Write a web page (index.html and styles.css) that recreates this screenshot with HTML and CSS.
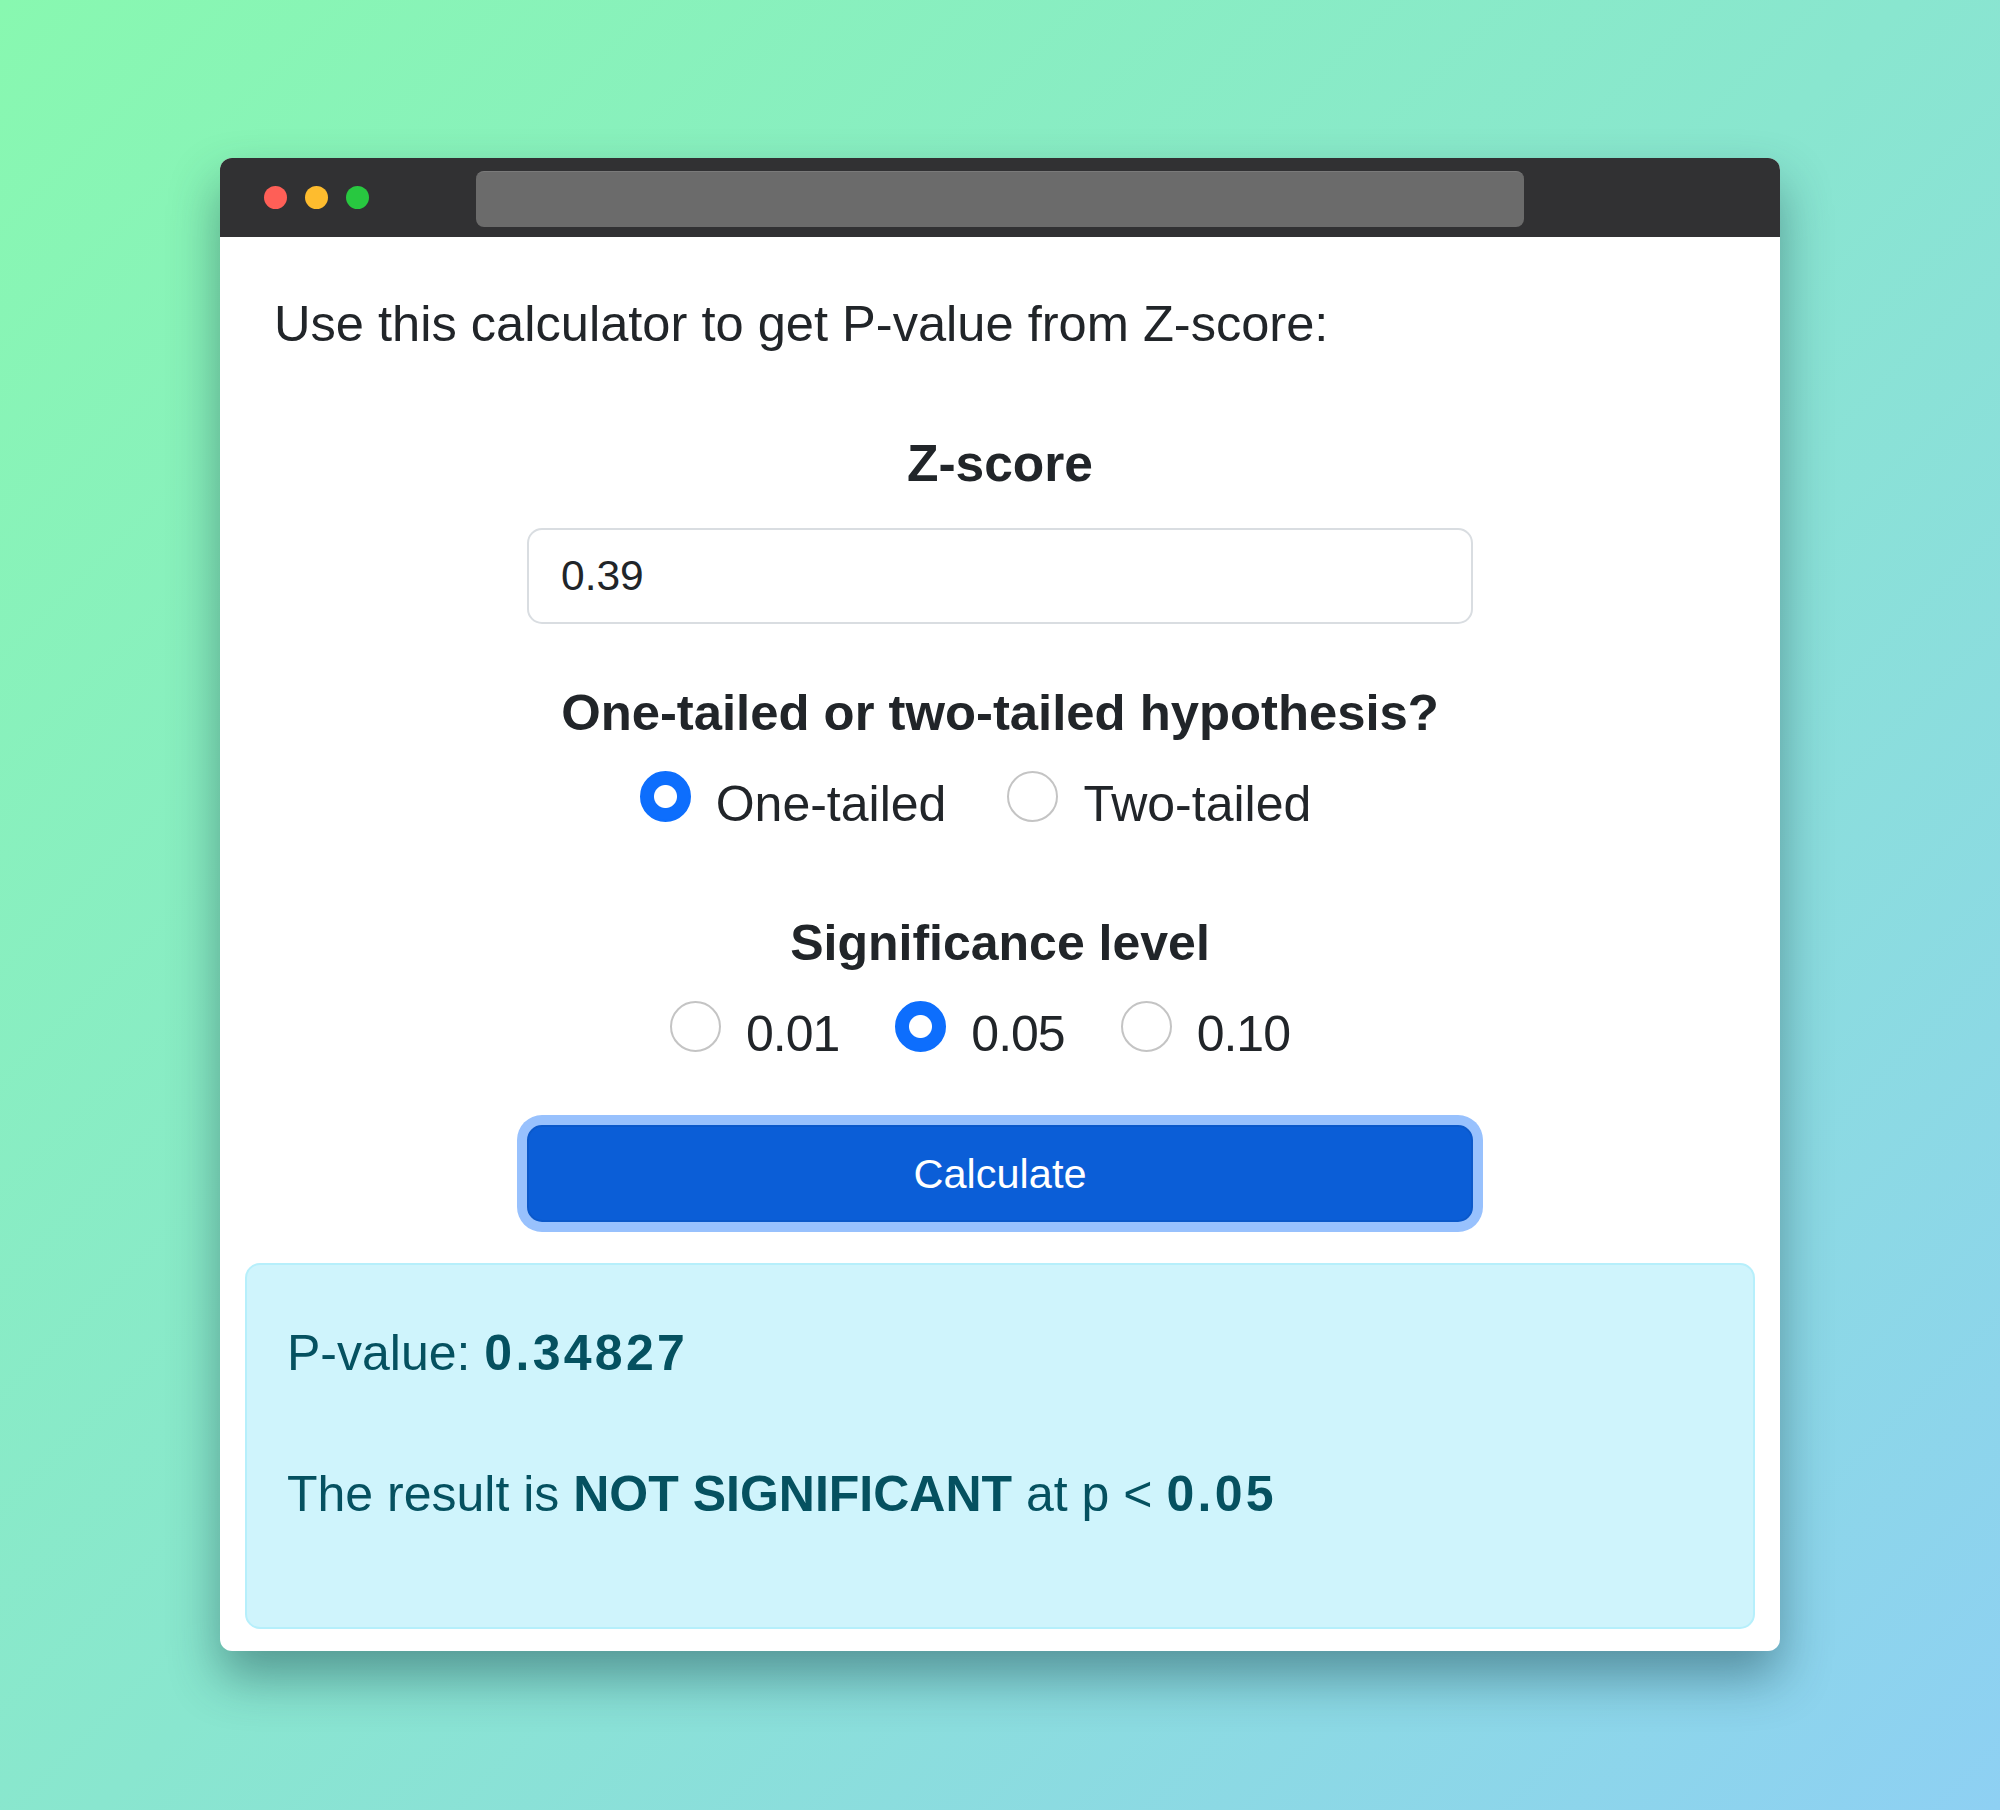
FILE: index.html
```html
<!DOCTYPE html>
<html lang="en">
<head>
<meta charset="utf-8">
<title>P-value from Z-score calculator</title>
<link rel="stylesheet" href="styles.css">
</head>
<body>
<div class="window">
  <div class="titlebar">
    <div class="lights">
      <span class="dot red"></span>
      <span class="dot yellow"></span>
      <span class="dot green"></span>
    </div>
    <div class="address"></div>
  </div>
  <div class="content">
    <p class="lead">Use this calculator to get P-value from Z-score:</p>
    <div class="form">
      <label class="heading h-z" for="z">Z-score</label>
      <input class="field" id="z" type="text" value="0.39">
      <div class="heading h-tail">One-tailed or two-tailed hypothesis?</div>
      <div class="options tails">
        <label class="opt"><input type="radio" name="tail" checked><span>One-tailed</span></label>
        <label class="opt"><input type="radio" name="tail"><span>Two-tailed</span></label>
      </div>
      <div class="heading h-sig">Significance level</div>
      <div class="options">
        <label class="opt"><input type="radio" name="sig"><span class="digits">0.01</span></label>
        <label class="opt"><input type="radio" name="sig" checked><span class="digits">0.05</span></label>
        <label class="opt"><input type="radio" name="sig"><span class="digits">0.10</span></label>
      </div>
      <button class="btn" type="button">Calculate</button>
    </div>
    <div class="alert">
      <p class="pv">P-value: <strong class="num">0.34827</strong></p>
      <p class="res">The result is <strong>NOT SIGNIFICANT</strong> at p &lt; <strong class="num">0.05</strong></p>
    </div>
  </div>
</div>
</body>
</html>
```

FILE: styles.css
```css
* {
  box-sizing: border-box;
}

html, body {
  margin: 0;
  padding: 0;
}

body {
  width: 2000px;
  height: 1810px;
  overflow: hidden;
  background: linear-gradient(135deg, #88f8b0 0%, #89e6cf 50%, #8ed0f3 100%);
  font-family: "Liberation Sans", Arial, Helvetica, sans-serif;
  color: #212529;
  padding-top: 158px;
}

.window {
  width: 1560px;
  margin-left: 220px;
  background: #ffffff;
  border-radius: 12px;
  box-shadow: 0 26px 50px rgba(20, 60, 70, 0.45);
  overflow: hidden;
}

.titlebar {
  height: 79px;
  background: #313133;
  display: flex;
  align-items: center;
  padding-left: 44px;
}

.lights {
  display: flex;
  gap: 18px;
}

.dot {
  width: 23px;
  height: 23px;
  border-radius: 50%;
  display: block;
}

.red { background: #fe5f57; }
.yellow { background: #febc2e; }
.green { background: #28c840; }

.address {
  margin-left: 107px;
  width: 1048px;
  height: 56px;
  margin-top: 2px;
  background: #6b6b6b;
  border-radius: 8px;
  border-top: 1px solid #7a7a7a;
}

.content {
  padding: 49px 25px 22px;
}

.lead {
  margin: 0 0 0 29px;
  font-size: 50.6px;
  line-height: 75px;
}

.form {
  display: flex;
  flex-direction: column;
  align-items: center;
}

.heading {
  display: block;
  font-size: 50px;
  line-height: 60px;
  font-weight: 700;
}

.h-z {
  margin-top: 72px;
  font-size: 51.5px;
}

.field {
  margin-top: 35px;
  width: 946px;
  height: 96px;
  border: 2.5px solid #d9dde1;
  border-radius: 15px;
  padding: 0 32px;
  font-family: "Liberation Sans", Arial, Helvetica, sans-serif;
  font-size: 42.5px;
  color: #212529;
  background: #fff;
  outline: none;
}

.h-tail {
  margin-top: 59px;
  font-size: 50.8px;
}

.h-sig {
  margin-top: 71px;
}

.options {
  margin-top: 24px;
  display: flex;
  justify-content: center;
}

.opt {
  display: flex;
  align-items: flex-start;
  gap: 25px;
  font-size: 50px;
  line-height: 75px;
  margin-right: 40px;
}

.opt + .opt {
  margin-left: 16px;
}

.tails {
  padding-right: 9px;
}

.tails .opt + .opt {
  margin-left: 21px;
}

.digits {
  letter-spacing: -1px;
}

.opt input {
  appearance: none;
  -webkit-appearance: none;
  margin: 4px 0 0 0;
  width: 51px;
  height: 51px;
  border-radius: 50%;
  border: 2.5px solid #c4c4c4;
  background: #fff;
  flex: none;
}

.opt input:checked {
  border-color: #0d6efd;
  background: radial-gradient(circle, #ffffff 0 11px, #0d6efd 12px);
}

.btn {
  margin-top: 53px;
  width: 946px;
  height: 97px;
  background: #0b5ed7;
  border: 2.5px solid #0a58ca;
  border-radius: 15px;
  box-shadow: 0 0 0 10px #98c1fd;
  color: #ffffff;
  font-family: "Liberation Sans", Arial, Helvetica, sans-serif;
  font-size: 41.5px;
  line-height: 60px;
  cursor: pointer;
}

.alert {
  margin-top: 41px;
  background: #cff4fc;
  border: 2px solid #b6effb;
  border-radius: 15px;
  color: #055160;
  padding: 51px 40px 95px;
  font-size: 50px;
  line-height: 75px;
}

.alert p {
  margin: 0;
}

.alert strong {
  font-weight: 700;
}

.alert .num {
  letter-spacing: 3.3px;
}

.alert .pv {
  margin-bottom: 66px;
}
```
